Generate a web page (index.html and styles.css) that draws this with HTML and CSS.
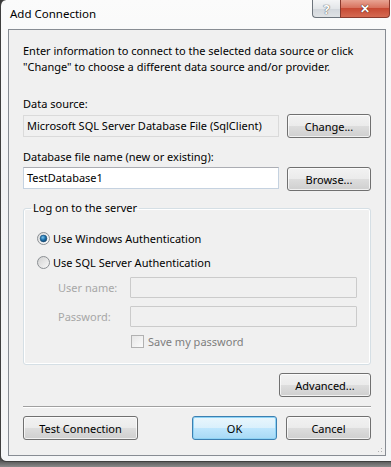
FILE: index.html
```html
<!DOCTYPE html>
<html>

<head>
  <meta name="viewport" content="width=device-width, initial-scale=1.0">
  <link rel="stylesheet" href="styles.css">
</head>

<body>
  <div class="window">
    <div class="titlebar">
      <span class="title">Add Connection</span>
      <div class="caption-btns">
        <span class="cap help">?</span>
        <span class="cap close">&#x2715;</span>
      </div>
    </div>

    <div class="panel">
      <p class="intro">Enter information to connect to the selected data source or click<br>"Change" to choose a different data source and/or provider.</p>

      <div class="field-label">Data source:</div>
      <div class="row row-center">
        <div class="readonly">Microsoft SQL Server Database File (SqlClient)</div>
        <button class="btn side-btn" type="button">Change...</button>
      </div>

      <div class="field-label second">Database file name (new or existing):</div>
      <div class="row">
        <div class="textbox">TestDatabase1</div>
        <button class="btn side-btn" type="button">Browse...</button>
      </div>

      <fieldset class="group">
        <legend>Log on to the server</legend>
        <div class="radio-row">
          <svg class="radio" width="13" height="13" viewBox="0 0 13 13">
            <defs>
              <linearGradient id="rfill" x1="0" y1="0" x2="1" y2="1">
                <stop offset="0" stop-color="#d8d8d8" />
                <stop offset="1" stop-color="#ffffff" />
              </linearGradient>
              <radialGradient id="rdot" cx="0.4" cy="0.35" r="0.7">
                <stop offset="0" stop-color="#7fc4ea" />
                <stop offset="0.5" stop-color="#1f74b0" />
                <stop offset="1" stop-color="#0c3f66" />
              </radialGradient>
            </defs>
            <circle cx="6.5" cy="6.5" r="6" fill="url(#rfill)" stroke="#8b8f93" />
            <circle cx="6.5" cy="6.5" r="3.4" fill="url(#rdot)" stroke="#1c4f78" stroke-width="0.6" />
          </svg>
          <span>Use Windows Authentication</span>
        </div>
        <div class="radio-row second">
          <svg class="radio" width="13" height="13" viewBox="0 0 13 13">
            <defs>
              <linearGradient id="rfill2" x1="0" y1="0" x2="1" y2="1">
                <stop offset="0" stop-color="#d0d0d0" />
                <stop offset="1" stop-color="#fafafa" />
              </linearGradient>
            </defs>
            <circle cx="6.5" cy="6.5" r="6" fill="url(#rfill2)" stroke="#8b8f93" />
          </svg>
          <span>Use SQL Server Authentication</span>
        </div>

        <div class="cred-row first">
          <span class="cred-label">User name:</span>
          <div class="cred-box"></div>
        </div>
        <div class="cred-row">
          <span class="cred-label">Password:</span>
          <div class="cred-box"></div>
        </div>
        <div class="check-row">
          <span class="checkbox"></span>
          <span>Save my password</span>
        </div>
      </fieldset>

      <div class="adv-row">
        <button class="btn adv-btn" type="button">Advanced...</button>
      </div>

      <div class="sep"></div>

      <div class="footer-row">
        <button class="btn test-btn" type="button">Test Connection</button>
        <div class="footer-right">
          <button class="btn ok-btn" type="button">OK</button>
          <button class="btn cancel-btn" type="button">Cancel</button>
        </div>
      </div>
      <span class="grip"></span>
    </div>
  </div>
</body>

</html>
```

FILE: styles.css
```css
* {
  box-sizing: border-box;
}

html,
body {
  margin: 0;
  height: 467px;
  overflow: hidden;
}

body {
  background: linear-gradient(to bottom, #3a3a3a 0%, #3a3a3a 98%, #8a8a8a 100%);
  font-family: "Noto Sans", "Open Sans", sans-serif;
  font-size: 11px;
  color: #000;
}

.window {
  width: 398px;
  height: 462px;
  background: linear-gradient(to bottom, #fbfbfb 0%, #f1f2f4 40%, #f5f6f7 100%);
  border-left: 1px solid #3f3f3f;
  border-bottom: 1px solid #3f3f3f;
  border-radius: 6px 0 0 6px;
  padding: 0 7px 0 7px;
}

.titlebar {
  height: 29px;
  display: flex;
  align-items: flex-start;
  justify-content: space-between;
  padding-left: 2px;
  padding-right: 1px;
}

.title {
  font-size: 11.5px;
  line-height: 28px;
}

.caption-btns {
  display: flex;
}

.cap {
  height: 18px;
  display: flex;
  align-items: center;
  justify-content: center;
  border: 1px solid #6d747c;
  border-top: none;
}

.help {
  width: 28px;
  border-radius: 0 0 0 4px;
  border-right: none;
  background: linear-gradient(to bottom, #f4f5f6 0%, #e3e6e9 50%, #d2d6db 51%, #dfe2e5 100%);
  color: #fff;
  font-size: 13px;
  font-weight: bold;
  text-shadow: 0 0 1px #555, 0 0 1px #555;
}

.close {
  width: 50px;
  border-radius: 0 0 4px 0;
  background: linear-gradient(to bottom, #e8a493 0%, #d8735f 45%, #c74a34 50%, #d46a52 100%);
  color: #fff;
  font-size: 12px;
  font-weight: bold;
  text-shadow: 0 0 1px #4a1a12, 0 0 1px #4a1a12;
  border-color: #8a3a2e;
}

.panel {
  position: relative;
  width: 378px;
  height: 427px;
  background: #f0f0f0;
  border: 1px solid #878c93;
  padding: 13px 14px 0 14px;
}

.intro {
  margin: 0;
  line-height: 16px;
}

.field-label {
  margin-top: 21px;
  line-height: 16px;
}

.field-label.second {
  margin-top: 11px;
}

.row {
  display: flex;
  justify-content: space-between;
  align-items: flex-start;
  margin-top: 2px;
}

.row-center {
  align-items: center;
}

.readonly,
.textbox {
  width: 256px;
  height: 22px;
  line-height: 20px;
  padding-left: 3px;
  white-space: nowrap;
  overflow: hidden;
}

.readonly {
  border: 1px solid #dadada;
  background: #f0f0f0;
}

.textbox {
  background: #fff;
  border: 1px solid #c5d2e0;
  border-top-color: #abadb3;
}

.btn {
  font-family: inherit;
  font-size: 11px;
  color: #000;
  height: 24px;
  padding: 0;
  border: 1px solid #707070;
  border-radius: 3px;
  background: linear-gradient(to bottom, #f2f2f2 0%, #ebebeb 50%, #dddddd 51%, #cfcfcf 100%);
  box-shadow: inset 0 0 0 1px rgba(255, 255, 255, 0.7);
}

.side-btn {
  width: 84px;
}

.group {
  margin: 9px 0 0 0;
  min-width: 0;
  border: 1px solid #d5dfe5;
  border-radius: 3px;
  box-shadow: inset 0 0 0 1px #fff;
  padding: 14px 13px 15px 13px;
}

.group legend {
  padding: 0 2px;
  margin-left: -6px;
  line-height: 16px;
}

.radio-row {
  display: flex;
  align-items: center;
  height: 16px;
  gap: 3px;
}

.radio-row.second {
  margin-top: 8px;
}

.cred-row {
  display: flex;
  align-items: center;
  margin-top: 8px;
  padding-left: 21px;
}

.cred-row.first {
  margin-top: 7px;
}

.cred-label {
  width: 72px;
  color: #a7a7a7;
}

.cred-box {
  flex: 1;
  height: 21px;
  background: #f0f0f0;
  border: 1px solid #cbcbcb;
  border-radius: 1px;
}

.check-row {
  display: flex;
  align-items: center;
  height: 16px;
  margin-top: 6px;
  padding-left: 94px;
  gap: 4px;
  color: #7e7e7e;
}

.checkbox {
  width: 13px;
  height: 13px;
  border: 1px solid #b1b1b1;
  background: linear-gradient(135deg, #e6e6e6 0%, #fbfbfb 100%);
}

.adv-row {
  display: flex;
  justify-content: flex-end;
  margin-top: 8px;
}

.adv-btn {
  width: 92px;
}

.sep {
  margin-top: 9px;
  height: 2px;
  border-top: 1px solid #a0a0a0;
  border-bottom: 1px solid #fff;
}

.footer-row {
  display: flex;
  justify-content: space-between;
  margin-top: 8px;
}

.footer-right {
  display: flex;
  gap: 9px;
}

.test-btn {
  width: 115px;
}

.ok-btn,
.cancel-btn {
  width: 85px;
}

.ok-btn {
  border-color: #3c7fb1;
  background: linear-gradient(to bottom, #eaf6fd 0%, #d9f0fc 50%, #bee6fd 51%, #a7d9f5 100%);
  box-shadow: inset 0 0 0 1px #8ed3f5;
}

.grip {
  position: absolute;
  right: 1px;
  bottom: 1px;
  width: 10px;
  height: 10px;
  background-image: radial-gradient(circle, #b0b0b0 0.8px, transparent 1px);
  background-size: 3px 3px;
  clip-path: polygon(100% 0, 100% 100%, 0 100%);
}
```
